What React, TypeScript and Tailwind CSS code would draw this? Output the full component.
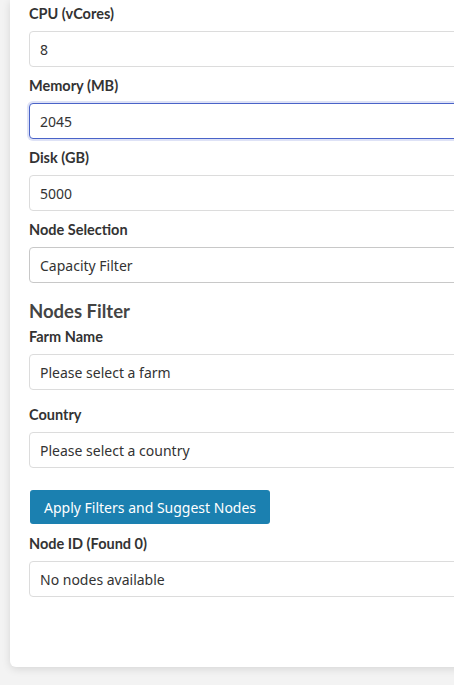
import React from "react"

const labelCls = "block text-[14.5px] leading-[20px] font-bold text-[#333] mb-[7px] font-['Lato',sans-serif]"
const baseField =
  "flex items-center h-[36px] w-full rounded-[4px] border bg-white px-[10px] text-[14px] text-[#333] font-['Noto_Sans',sans-serif]"

function Field({ label, value, focused, select }: { label: string; value: string; focused?: boolean; select?: boolean }) {
  const tone = focused
    ? "border-[#4a63c8] shadow-[0_0_0_2px_rgba(90,110,210,0.2)]"
    : select
    ? "border-[#c8c8c8]"
    : "border-[#dcdcdc]"
  return (
    <div>
      <label className={labelCls}>{label}</label>
      <div className={baseField + " " + tone}>{value}</div>
    </div>
  )
}

export default function App() {
  return (
    <div className="h-[685px] w-[454px] overflow-hidden bg-[#f3f3f3]">
      <div className="ml-[10px] w-[620px] rounded-b-[6px] bg-white pl-[19px] pr-[20px] pt-[4px] pb-[70px] shadow-[0_2px_8px_rgba(0,0,0,0.12)]">
        <div className="flex flex-col gap-[9px]">
          <Field label="CPU (vCores)" value="8" />
          <Field label="Memory (MB)" value="2045" focused />
          <Field label="Disk (GB)" value="5000" />
          <Field label="Node Selection" value="Capacity Filter" select />
        </div>

        <h3 className="mt-[16px] mb-[4px] text-[18.5px] leading-[24px] font-bold text-[#444] font-['Lato',sans-serif]">
          Nodes Filter
        </h3>

        <div className="flex flex-col gap-[15px]">
          <Field label="Farm Name" value="Please select a farm" />
          <Field label="Country" value="Please select a country" />
        </div>

        <button className="mt-[22px] ml-px h-[34px] rounded-[3px] bg-[#1b80b0] px-[14px] text-[14px] text-white font-['Noto_Sans',sans-serif]">
          Apply Filters and Suggest Nodes
        </button>

        <div className="mt-[10px]">
          <Field label="Node ID (Found 0)" value="No nodes available" />
        </div>
      </div>
    </div>
  )
}
